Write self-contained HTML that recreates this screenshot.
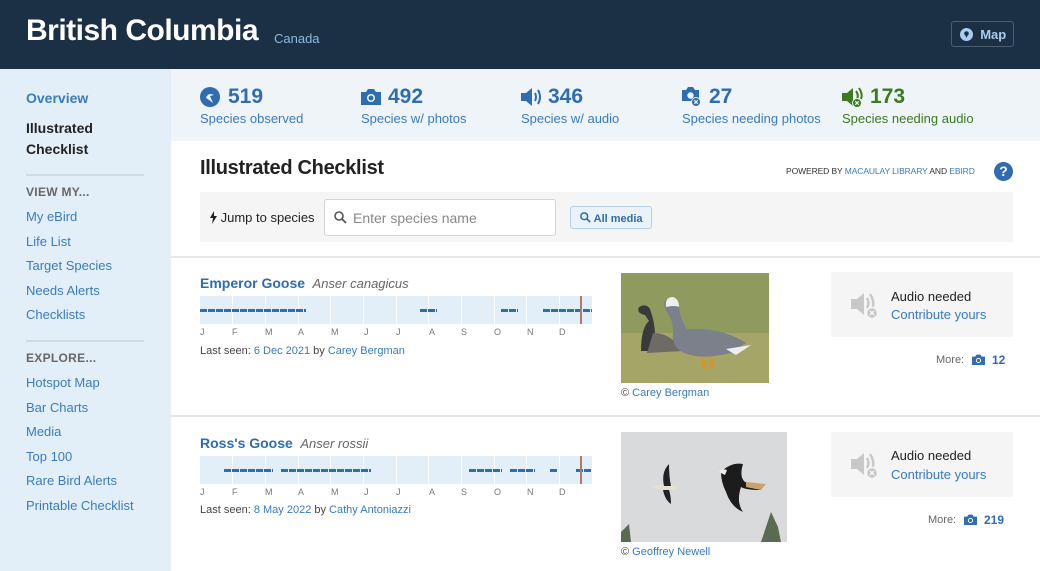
<!DOCTYPE html>
<html><head><meta charset="utf-8">
<style>
*{margin:0;padding:0;box-sizing:border-box}
body{width:1040px;height:571px;overflow:hidden;font-family:"Liberation Sans",Arial,sans-serif;background:#fff;position:relative;color:#222}
.a{position:absolute;white-space:nowrap}
.blue{color:#3a7bbf}
.hdr{left:0;top:0;width:1040px;height:69px;background:#1b3045}
.side{left:0;top:69px;width:171px;height:502px;background:#e3eff8}
.stats{left:171px;top:69px;width:869px;height:72px;background:#eef4f8}
.num{font-size:21px;font-weight:bold;color:#2f6cb0;top:85px}
.lbl{font-size:13px;color:#3a7bbf;top:111px}
.nav{font-size:13px;color:#3a7bbf;left:26px}
.sec{font-size:12px;font-weight:bold;color:#666;left:26px;letter-spacing:.3px}
.hr{left:26px;width:118px;height:2px;background:#cfdbe5}
.chart{left:200px;width:392px;height:28px;background:#e3eff8}
.sep{width:1px;height:28px;background:#fff;top:0}
.bar{height:3px;top:13px;background:repeating-linear-gradient(90deg,#2f6cb0 0 7px,transparent 7px 8px)}
.red{width:2px;height:28px;top:0;left:380px;background:#b07a6a}
.ml{font-size:9px;color:#777}
.ls{font-size:11px;color:#444}
.box{background:#f5f5f5}
</style></head><body>
<div class="a hdr"></div>
<div class="a" style="left:26px;top:14px;font-size:30px;font-weight:bold;color:#fff;letter-spacing:-.5px">British Columbia</div>
<div class="a" style="left:274px;top:31px;font-size:13px;color:#8db9e0">Canada</div>
<div class="a" style="left:951px;top:21px;width:63px;height:26px;border:1px solid #4a5f72;border-radius:3px;color:#a9cdee;font-size:13px;font-weight:bold;padding:5px 0 0 8px">
<svg width="13" height="13" viewBox="0 0 13 13" style="vertical-align:-2px"><circle cx="6.5" cy="6.5" r="6.5" fill="#a9cdee"/><circle cx="6.5" cy="5.5" r="2.3" fill="#1b3045"/><path d="M5.3 7h2.4l-1.2 3z" fill="#1b3045"/></svg>&nbsp; Map</div>

<div class="a side"></div>
<div class="a" style="left:26px;top:90px;font-size:14px;font-weight:bold;color:#3a7bbf">Overview</div>
<div class="a" style="left:26px;top:118px;font-size:14px;font-weight:bold;color:#222;line-height:21px">Illustrated<br>Checklist</div>
<div class="a hr" style="top:174px"></div>
<div class="a sec" style="top:185px">VIEW MY...</div>
<div class="a nav" style="top:209px">My eBird</div>
<div class="a nav" style="top:234px">Life List</div>
<div class="a nav" style="top:258px">Target Species</div>
<div class="a nav" style="top:283px">Needs Alerts</div>
<div class="a nav" style="top:307px">Checklists</div>
<div class="a hr" style="top:340px"></div>
<div class="a sec" style="top:351px">EXPLORE...</div>
<div class="a nav" style="top:375px">Hotspot Map</div>
<div class="a nav" style="top:400px">Bar Charts</div>
<div class="a nav" style="top:424px">Media</div>
<div class="a nav" style="top:449px">Top 100</div>
<div class="a nav" style="top:473px">Rare Bird Alerts</div>
<div class="a nav" style="top:498px">Printable Checklist</div>

<div class="a stats"></div>
<svg class="a" style="left:200px;top:87px" width="20" height="20" viewBox="0 0 20 20"><circle cx="10" cy="10" r="10" fill="#2f6cb0"/><path d="M6 11 Q8 5 14 8 L10 9 L13 16 Q8 12 6 11z" fill="#eef4f8"/></svg>
<div class="a num" style="left:228px">519</div>
<div class="a lbl" style="left:200px">Species observed</div>
<svg class="a" style="left:361px;top:88px" width="20" height="17" viewBox="0 0 20 17"><path d="M0 4h5l2-3h6l2 3h5v13H0z" fill="#2f6cb0"/><circle cx="10" cy="10" r="4" fill="#eef4f8"/><circle cx="10" cy="10" r="2.5" fill="#2f6cb0"/></svg>
<div class="a num" style="left:388px">492</div>
<div class="a lbl" style="left:361px">Species w/ photos</div>
<svg class="a" style="left:521px;top:87px" width="22" height="20" viewBox="0 0 22 20"><path d="M0 6h5l6-5v18l-6-5H0z" fill="#2f6cb0"/><path d="M14 6q2 4 0 8M17 3q4 7 0 14" stroke="#2f6cb0" stroke-width="2" fill="none"/></svg>
<div class="a num" style="left:548px">346</div>
<div class="a lbl" style="left:521px">Species w/ audio</div>
<svg class="a" style="left:682px;top:86px" width="20" height="22" viewBox="0 0 20 22"><path d="M0 4h4l2-3h5l2 3h4v11H0z" fill="#2f6cb0"/><circle cx="8.5" cy="9.5" r="3.2" fill="#eef4f8"/><circle cx="14" cy="16" r="4.5" fill="#2f6cb0" stroke="#eef4f8" stroke-width="1"/><path d="M12.3 14.3l3.4 3.4M15.7 14.3l-3.4 3.4" stroke="#fff" stroke-width="1.2"/></svg>
<div class="a num" style="left:709px">27</div>
<div class="a lbl" style="left:682px">Species needing photos</div>
<svg class="a" style="left:842px;top:86px" width="22" height="22" viewBox="0 0 22 22"><path d="M0 7h5l6-5v18l-6-5H0z" fill="#3b7a1e"/><path d="M14 5q3 4 1 8M17 2q4 6 2 11" stroke="#3b7a1e" stroke-width="2" fill="none"/><circle cx="15" cy="17" r="4.5" fill="#3b7a1e" stroke="#eef4f8"/><path d="M13.3 15.3l3.4 3.4M16.7 15.3l-3.4 3.4" stroke="#fff" stroke-width="1.2"/></svg>
<div class="a num" style="left:870px;color:#3b7a1e">173</div>
<div class="a lbl" style="left:842px;color:#3b7a1e">Species needing audio</div>

<div class="a" style="left:200px;top:157px;font-size:20px;font-weight:bold;color:#222;letter-spacing:-.3px">Illustrated Checklist</div>
<div class="a" style="left:786px;top:166px;font-size:8.5px;color:#333;letter-spacing:-.1px">POWERED BY <span class="blue">MACAULAY LIBRARY</span> AND <span class="blue">EBIRD</span></div>
<div class="a" style="left:994px;top:162px;width:19px;height:19px;border-radius:50%;background:#2f6cb0;color:#fff;font-size:14px;font-weight:bold;text-align:center;line-height:19px">?</div>

<div class="a box" style="left:200px;top:192px;width:813px;height:50px"></div>
<div class="a" style="left:209px;top:210px;font-size:13px;color:#222"><svg width="8" height="13" viewBox="0 0 8 13" style="vertical-align:-2px"><path d="M5 0L1 7h3l-1 6 5-8H5z" fill="#222"/></svg> Jump to species</div>
<div class="a" style="left:324px;top:199px;width:232px;height:37px;background:#fff;border:1px solid #d6d6d6;border-radius:3px"></div>
<svg class="a" style="left:334px;top:211px" width="13" height="13" viewBox="0 0 13 13"><circle cx="5" cy="5" r="4" stroke="#555" stroke-width="1.6" fill="none"/><path d="M8 8l4 4" stroke="#555" stroke-width="1.8"/></svg>
<div class="a" style="left:353px;top:210px;font-size:14px;color:#888">Enter species name</div>
<div class="a" style="left:570px;top:206px;width:82px;height:23px;background:#eaf2fa;border:1px solid #b8cfe4;border-radius:3px;font-size:11px;font-weight:bold;color:#2f6cb0;padding:5px 0 0 9px"><svg width="11" height="11" viewBox="0 0 13 13" style="vertical-align:-1px"><circle cx="5" cy="5" r="4" stroke="#2f6cb0" stroke-width="1.8" fill="none"/><path d="M8 8l4 4" stroke="#2f6cb0" stroke-width="2"/></svg> All media</div>

<div class="a" style="left:171px;top:256px;width:869px;height:2px;background:#e6e6e6"></div>
<div class="a" style="left:171px;top:415px;width:869px;height:2px;background:#e6e6e6"></div>

<!-- Row 1 -->
<div class="a" style="left:200px;top:275px;font-size:14px;font-weight:bold;color:#2f6cb0">Emperor Goose <span style="font-weight:normal;font-style:italic;color:#666;font-size:13px">&nbsp;Anser canagicus</span></div>
<div class="a chart" style="top:296px">
<div class="a sep" style="left:32px"></div><div class="a sep" style="left:65px"></div><div class="a sep" style="left:98px"></div><div class="a sep" style="left:130px"></div><div class="a sep" style="left:163px"></div><div class="a sep" style="left:196px"></div><div class="a sep" style="left:228px"></div><div class="a sep" style="left:261px"></div><div class="a sep" style="left:294px"></div><div class="a sep" style="left:326px"></div><div class="a sep" style="left:359px"></div>
<div class="a bar" style="left:0;width:106px"></div><div class="a bar" style="left:220px;width:17px"></div><div class="a bar" style="left:301px;width:17px"></div><div class="a bar" style="left:343px;width:49px"></div>
<div class="a red"></div></div>
<div class="a ml" style="top:327px;left:200px">J</div><div class="a ml" style="top:327px;left:232px">F</div><div class="a ml" style="top:327px;left:265px">M</div><div class="a ml" style="top:327px;left:298px">A</div><div class="a ml" style="top:327px;left:331px">M</div><div class="a ml" style="top:327px;left:364px">J</div><div class="a ml" style="top:327px;left:396px">J</div><div class="a ml" style="top:327px;left:429px">A</div><div class="a ml" style="top:327px;left:461px">S</div><div class="a ml" style="top:327px;left:494px">O</div><div class="a ml" style="top:327px;left:527px">N</div><div class="a ml" style="top:327px;left:559px">D</div>
<div class="a ls" style="left:200px;top:345px">Last seen: <span class="blue">6 Dec 2021</span> by <span class="blue">Carey Bergman</span></div>
<svg class="a" style="left:621px;top:273px" width="148" height="110" viewBox="0 0 148 110"><rect width="148" height="110" fill="#8f9b5e"/><rect y="60" width="148" height="50" fill="#a4a566"/><path d="M20 78 Q20 55 28 48 L24 42 Q15 40 18 34 Q25 30 29 36 Q34 50 34 62 Q50 62 60 78z" fill="#3a3a3a"/><path d="M32 60 Q50 60 62 78 L26 80z" fill="#6e6a66"/><path d="M45 35 Q40 28 48 26 Q56 24 58 34 Q60 48 66 56 Q100 54 125 70 L110 80 Q85 86 70 82 Q50 78 52 60 Q52 45 45 38z" fill="#7c808a"/><path d="M45 33 Q44 24 52 24 Q58 26 58 34 Q54 32 45 34z" fill="#eee"/><path d="M105 76 L130 72 L115 82z" fill="#eee"/><path d="M82 84 L83 96 M90 84 L91 96" stroke="#d8942c" stroke-width="3"/></svg>
<div class="a" style="left:621px;top:387px;font-size:11px;color:#444">© <span class="blue">Carey Bergman</span></div>
<div class="a box" style="left:831px;top:272px;width:182px;height:65px"></div>
<svg class="a" style="left:851px;top:290px" width="28" height="30" viewBox="0 0 28 30"><path d="M0 9h6l7-6v22l-7-6H0z" fill="#c8c8c8"/><path d="M16 8q3 5 0 10M19 4q6 9 1 18" stroke="#c8c8c8" stroke-width="2.4" fill="none"/><circle cx="21" cy="23" r="5.5" fill="#c8c8c8" stroke="#f5f5f5" stroke-width="1.5"/><path d="M19 21l4 4M23 21l-4 4" stroke="#f5f5f5" stroke-width="1.4"/></svg>
<div class="a" style="left:891px;top:289px;font-size:13px;color:#222">Audio needed</div>
<div class="a" style="left:891px;top:307px;font-size:13px;color:#3a7bbf">Contribute yours</div>
<div class="a" style="left:936px;top:354px;font-size:11px;color:#666">More:</div>
<svg class="a" style="left:972px;top:354px" width="13" height="11" viewBox="0 0 20 17"><path d="M0 4h5l2-3h6l2 3h5v13H0z" fill="#2f6cb0"/><circle cx="10" cy="10" r="4" fill="#fff"/><circle cx="10" cy="10" r="2.5" fill="#2f6cb0"/></svg>
<div class="a" style="left:992px;top:353px;font-size:12px;font-weight:bold;color:#2f6cb0">12</div>

<!-- Row 2 -->
<div class="a" style="left:200px;top:435px;font-size:14px;font-weight:bold;color:#2f6cb0">Ross's Goose <span style="font-weight:normal;font-style:italic;color:#666;font-size:13px">&nbsp;Anser rossii</span></div>
<div class="a chart" style="top:456px">
<div class="a sep" style="left:32px"></div><div class="a sep" style="left:65px"></div><div class="a sep" style="left:98px"></div><div class="a sep" style="left:130px"></div><div class="a sep" style="left:163px"></div><div class="a sep" style="left:196px"></div><div class="a sep" style="left:228px"></div><div class="a sep" style="left:261px"></div><div class="a sep" style="left:294px"></div><div class="a sep" style="left:326px"></div><div class="a sep" style="left:359px"></div>
<div class="a bar" style="left:24px;width:49px"></div><div class="a bar" style="left:81px;width:90px"></div><div class="a bar" style="left:269px;width:33px"></div><div class="a bar" style="left:310px;width:25px"></div><div class="a bar" style="left:350px;width:8px"></div><div class="a bar" style="left:376px;width:16px"></div>
<div class="a red"></div></div>
<div class="a ml" style="top:487px;left:200px">J</div><div class="a ml" style="top:487px;left:232px">F</div><div class="a ml" style="top:487px;left:265px">M</div><div class="a ml" style="top:487px;left:298px">A</div><div class="a ml" style="top:487px;left:331px">M</div><div class="a ml" style="top:487px;left:364px">J</div><div class="a ml" style="top:487px;left:396px">J</div><div class="a ml" style="top:487px;left:429px">A</div><div class="a ml" style="top:487px;left:461px">S</div><div class="a ml" style="top:487px;left:494px">O</div><div class="a ml" style="top:487px;left:527px">N</div><div class="a ml" style="top:487px;left:559px">D</div>
<div class="a ls" style="left:200px;top:504px">Last seen: <span class="blue">8 May 2022</span> by <span class="blue">Cathy Antoniazzi</span></div>
<svg class="a" style="left:621px;top:432px" width="166" height="110" viewBox="0 0 166 110"><rect width="166" height="110" fill="#d9dadc"/><path d="M30 55 Q45 50 58 56 Q48 60 30 55z" fill="#e8e0d0"/><path d="M43 54 Q40 40 48 32 Q48 45 50 54z" fill="#222"/><path d="M42 58 Q44 68 50 72 Q50 64 48 58z" fill="#222"/><path d="M100 40 Q110 30 122 32 Q118 45 124 50 Q132 52 140 52 L140 58 Q125 58 120 55 Q115 70 122 80 Q110 75 105 60 Q100 50 100 40z" fill="#1c1c1c"/><path d="M98 40 Q100 36 106 38 L104 43z" fill="#eee"/><path d="M125 50 L145 52 L140 58 Q130 56 125 55z" fill="#c9a36a"/><path d="M145 95 L150 80 L157 95 L160 110 L140 110z" fill="#5a6b50"/><path d="M0 100 L8 92 L10 110 L0 110z" fill="#5a6b50"/></svg>
<div class="a" style="left:621px;top:546px;font-size:11px;color:#444">© <span class="blue">Geoffrey Newell</span></div>
<div class="a box" style="left:831px;top:432px;width:182px;height:65px"></div>
<svg class="a" style="left:851px;top:450px" width="28" height="30" viewBox="0 0 28 30"><path d="M0 9h6l7-6v22l-7-6H0z" fill="#c8c8c8"/><path d="M16 8q3 5 0 10M19 4q6 9 1 18" stroke="#c8c8c8" stroke-width="2.4" fill="none"/><circle cx="21" cy="23" r="5.5" fill="#c8c8c8" stroke="#f5f5f5" stroke-width="1.5"/><path d="M19 21l4 4M23 21l-4 4" stroke="#f5f5f5" stroke-width="1.4"/></svg>
<div class="a" style="left:891px;top:448px;font-size:13px;color:#222">Audio needed</div>
<div class="a" style="left:891px;top:467px;font-size:13px;color:#3a7bbf">Contribute yours</div>
<div class="a" style="left:928px;top:514px;font-size:11px;color:#666">More:</div>
<svg class="a" style="left:964px;top:514px" width="13" height="11" viewBox="0 0 20 17"><path d="M0 4h5l2-3h6l2 3h5v13H0z" fill="#2f6cb0"/><circle cx="10" cy="10" r="4" fill="#fff"/><circle cx="10" cy="10" r="2.5" fill="#2f6cb0"/></svg>
<div class="a" style="left:984px;top:513px;font-size:12px;font-weight:bold;color:#2f6cb0">219</div>
</body></html>
